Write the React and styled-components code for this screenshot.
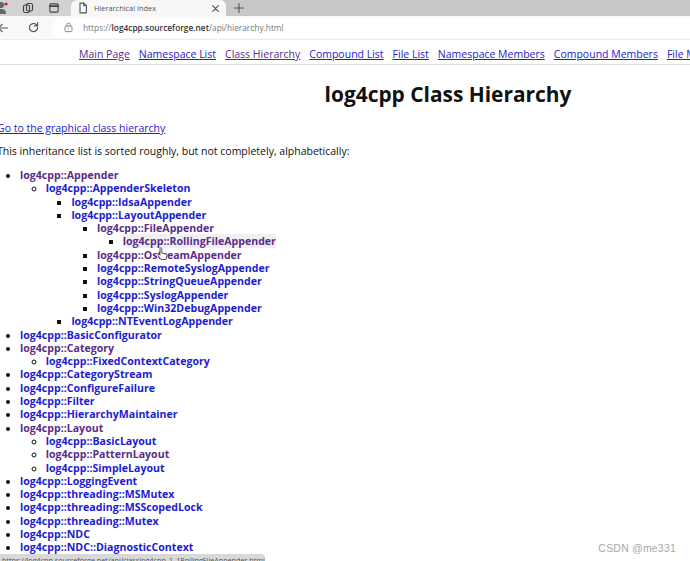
import React from "react";
import styled, { createGlobalStyle } from "styled-components";

const GlobalStyle = createGlobalStyle`
html, body {
  margin: 0;
  padding: 0;
  background: #fff;
}
body {
  font-family: "Open Sans", "Noto Sans", sans-serif;
  overflow: hidden;
}
`;

const Page = styled.div`
position: relative;
width: 690px;
height: 561px;
overflow: hidden;
background: #fff;
`;

const TabStrip = styled.div`
display: flex;
align-items: flex-end;
height: 16px;
background: #c8c8c8;
`;

const StripIcons = styled.div`
display: flex;
align-items: center;
gap: 14px;
width: 71px;
height: 16px;
box-sizing: border-box;
color: #444;
background: #d2d2d2;
`;

const Tab = styled.div`
display: flex;
align-items: center;
width: 155px;
height: 16px;
padding: 0 6px 0 6px;
box-sizing: border-box;
background: #f7f7f7;
border-radius: 6px 6px 0 0;
font-size: 7.4px;
color: #555;
`;

const TabTitle = styled.span`
flex: 1;
margin-left: 5px;
white-space: nowrap;
`;

const NewTab = styled.div`
display: flex;
align-items: center;
margin-left: 7px;
height: 16px;
color: #555;
`;

const AddressRow = styled.div`
display: flex;
align-items: center;
height: 23px;
background: #f9f9f9;
color: #555;
`;

const AddressPill = styled.div`
display: flex;
align-items: center;
flex: 1;
height: 20px;
margin-left: 12px;
padding-left: 11px;
border-radius: 10px 0 0 10px;
background: #fff;
font-size: 8.35px;
color: #777;
`;

const Host = styled.span`
color: #333;
font-weight: 600;
`;

const NavBar = styled.nav`
display: flex;
gap: 9px;
height: 26px;
padding: 7px 0 0 79px;
box-sizing: border-box;
border-top: 1px solid #ededed;
border-bottom: 1px solid #d9d9d9;
white-space: nowrap;
overflow: hidden;
font-size: 10.5px;
line-height: 15px;
`;

const NavLink = styled.a`
color: ${(p) => (p.$visited ? "#5a2d86" : "#2222cc")};
text-decoration: underline;
`;

const Content = styled.main`
margin-left: -3px;
color: #111;
font-size: 10.5px;
`;

const Title = styled.h1`
margin: 14px 0 0;
padding-left: 209px;
text-align: center;
font-size: 20.9px;
line-height: 31px;
font-weight: 700;
color: #111;
white-space: nowrap;
`;

const Jump = styled.a`
display: block;
margin-top: 11px;
line-height: 15px;
color: #2222cc;
text-decoration: underline;
`;

const Intro = styled.p`
margin: 8px 0 0;
line-height: 15px;
`;

const List = styled.ul`
margin: ${(p) => (p.$top ? "10px 0 0" : "0")};
padding: 0 0 0 ${(p) => (p.$top ? "23px" : "25.7px")};
list-style-type: ${(p) => p.$marker || "disc"};
`;

const Item = styled.li`
line-height: 13.3px;
font-size: 10.6px;
`;

const ClassLink = styled.a`
color: ${(p) => (p.$visited ? "#5a2d86" : "#1c1cd0")};
font-weight: 700;
background: ${(p) => (p.$hover ? "#f0f0f4" : "transparent")};
white-space: nowrap;
`;

const Cursor = styled.svg`
position: absolute;
left: 157px;
top: 247px;
`;

const StatusBar = styled.div`
position: absolute;
left: 0;
bottom: -3px;
width: 265px;
height: 10px;
padding-left: 2px;
box-sizing: border-box;
overflow: hidden;
border-radius: 0 4px 0 0;
background: #d8d8d8;
color: #555;
font-size: 7.2px;
line-height: 13px;
white-space: nowrap;
`;

const Watermark = styled.div`
position: absolute;
right: 14px;
bottom: 7px;
color: #a8a8a8;
font-family: "Liberation Sans", sans-serif;
font-size: 10.5px;
letter-spacing: 0.2px;
`;

const navLinks = [
  ["Main Page", true],
  ["Namespace List", false],
  ["Class Hierarchy", true],
  ["Compound List", false],
  ["File List", false],
  ["Namespace Members", false],
  ["Compound Members", false],
  ["File Members", false],
];

const Leaf = ({ name, visited, hover, children }) => (
  <Item>
    <ClassLink $visited={visited} $hover={hover}>log4cpp::{name}</ClassLink>
    {children}
  </Item>
);

const Icon = ({ children, size = 12 }) => (
  <svg width={size} height={size} viewBox="0 0 16 16" fill="none" stroke="currentColor" strokeWidth="1.5" strokeLinecap="round" strokeLinejoin="round">
    {children}
  </svg>
);

const App = () => (
  <Page>
    <GlobalStyle />
    <TabStrip>
      <StripIcons>
        <svg width="8" height="12" viewBox="0 0 8 12" fill="#666">
          <circle cx="1" cy="3" r="3" />
          <path d="M-4 12c0-4 2-5 5-5s5 1 5 5z" />
          <circle cx="6" cy="2" r="1.6" fill="#d01818" />
        </svg>
        <Icon>
          <rect x="6" y="2" width="8" height="10" rx="2" />
          <rect x="2" y="4" width="8" height="10" rx="2" />
        </Icon>
        <Icon>
          <rect x="2.5" y="2.5" width="11" height="11" rx="1.5" />
          <path d="M2.5 5.5h11" strokeWidth="2.5" />
        </Icon>
      </StripIcons>
      <Tab>
        <Icon>
          <path d="M4 1.5h5l3.5 3.5v9.5h-8.500z" />
          <path d="M9 1.500v3.500h3.500" />
        </Icon>
        <TabTitle>Hierarchical Index</TabTitle>
        <Icon size={9}>
          <path d="M3 3l10 10M13 3L3 13" strokeWidth="2" />
        </Icon>
      </Tab>
      <NewTab>
        <Icon>
          <path d="M8 2v12M2 8h12" />
        </Icon>
      </NewTab>
    </TabStrip>
    <AddressRow>
      <svg width="12" height="12" viewBox="0 0 16 16" fill="none" stroke="currentColor" strokeWidth="1.5" strokeLinecap="round" strokeLinejoin="round" style={{ marginLeft: -3 }}>
        <path d="M14 8H2M7 3L2 8l5 5" />
      </svg>
      <svg width="13" height="13" viewBox="0 0 16 16" fill="none" stroke="currentColor" strokeWidth="1.5" strokeLinecap="round" strokeLinejoin="round" style={{ marginLeft: 18 }}>
        <path d="M13 8a5 5 0 1 1-1.500-3.500L13 6M13 2v4H9" />
      </svg>
      <AddressPill>
        <svg width="11" height="11" viewBox="0 0 16 16" fill="none" stroke="#777" strokeWidth="1.300" style={{ marginRight: 9 }}>
          <rect x="3" y="6" width="10" height="8" rx="1.500" />
          <path d="M5.500 6V4a2.500 2.500 0 0 1 5 0v2M8 9v2" />
        </svg>
        <span>https://<Host>log4cpp.sourceforge.net</Host>/api/hierarchy.html</span>
      </AddressPill>
    </AddressRow>
    <NavBar>
      {navLinks.map(([label, visited]) => (
        <NavLink key={label} $visited={visited}>{label}</NavLink>
      ))}
    </NavBar>
    <Content>
      <Title>log4cpp Class Hierarchy</Title>
      <Jump>Go to the graphical class hierarchy</Jump>
      <Intro>This inheritance list is sorted roughly, but not completely, alphabetically:</Intro>
      <List $top>
        <Leaf name="Appender" visited>
          <List $marker="circle">
            <Leaf name="AppenderSkeleton">
              <List $marker="square">
                <Leaf name="IdsaAppender" />
                <Leaf name="LayoutAppender">
                  <List $marker="square">
                    <Leaf name="FileAppender" visited>
                      <List $marker="square">
                        <Leaf name="RollingFileAppender" visited hover />
                      </List>
                    </Leaf>
                    <Leaf name="OstreamAppender" visited />
                    <Leaf name="RemoteSyslogAppender" />
                    <Leaf name="StringQueueAppender" />
                    <Leaf name="SyslogAppender" />
                    <Leaf name="Win32DebugAppender" />
                  </List>
                </Leaf>
                <Leaf name="NTEventLogAppender" />
              </List>
            </Leaf>
          </List>
        </Leaf>
        <Leaf name="BasicConfigurator" />
        <Leaf name="Category" visited>
          <List $marker="circle">
            <Leaf name="FixedContextCategory" />
          </List>
        </Leaf>
        <Leaf name="CategoryStream" />
        <Leaf name="ConfigureFailure" />
        <Leaf name="Filter" />
        <Leaf name="HierarchyMaintainer" />
        <Leaf name="Layout" visited>
          <List $marker="circle">
            <Leaf name="BasicLayout" />
            <Leaf name="PatternLayout" visited />
            <Leaf name="SimpleLayout" />
          </List>
        </Leaf>
        <Leaf name="LoggingEvent" />
        <Leaf name="threading::MSMutex" />
        <Leaf name="threading::MSScopedLock" />
        <Leaf name="threading::Mutex" />
        <Leaf name="NDC" />
        <Leaf name="NDC::DiagnosticContext" />
      </List>
    </Content>
    <Cursor width="11" height="14" viewBox="0 0 11 14">
      <path d="M3 1.500c0-1 1.800-1 1.800 0V6l4 1c1 .3 1.200 1 1 2l-.8 3.500H4L1 8.500c-.6-1 .6-1.800 1.400-1L3 8.200z" fill="#fff" stroke="#444" strokeWidth="0.900" />
    </Cursor>
    <StatusBar>https://log4cpp.sourceforge.net/api/classlog4cpp_1_1RollingFileAppender.html</StatusBar>
    <Watermark>CSDN @me331</Watermark>
  </Page>
);

export default App;
